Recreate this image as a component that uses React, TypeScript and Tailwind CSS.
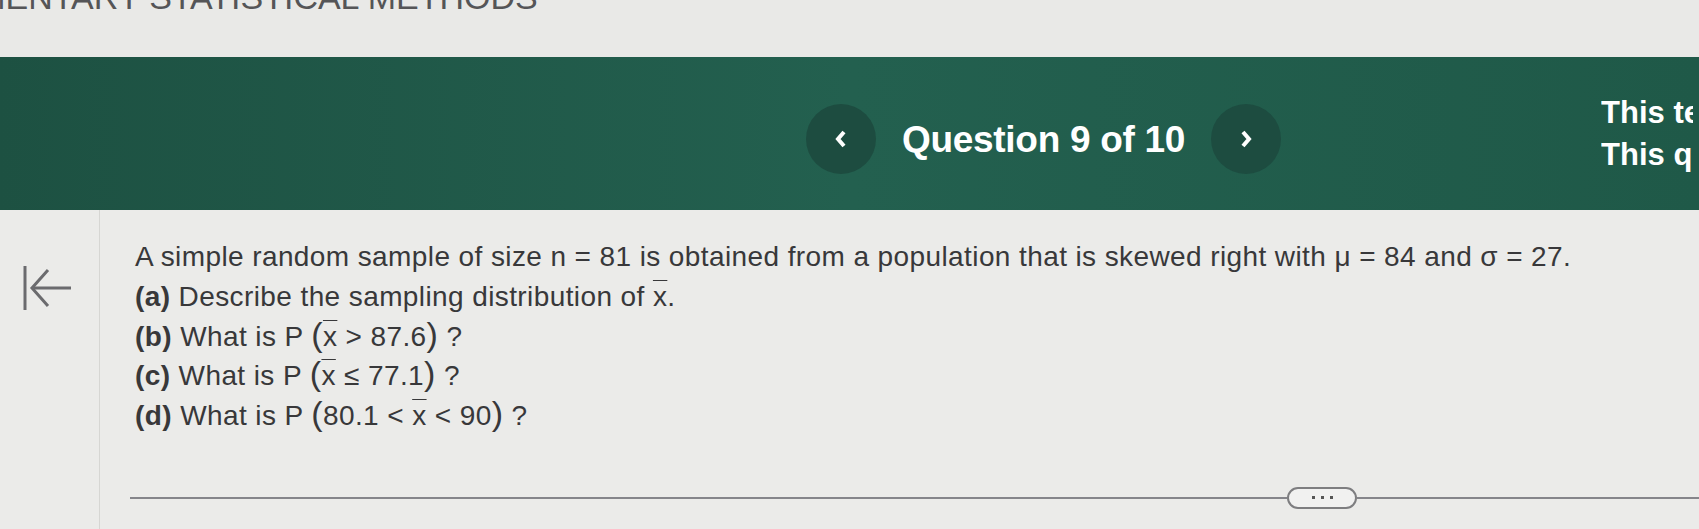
import React from 'react';

function Xbar() {
  return <span className="overline decoration-1">x</span>;
}

function Paren({ children }: { children: React.ReactNode }) {
  return <span className="text-[34px] font-light leading-none">{children}</span>;
}

function Chevron({ dir }: { dir: 'left' | 'right' }) {
  return (
    <svg width="14" height="22" viewBox="0 0 14 22" fill="none">
      <polyline
        points={dir === 'left' ? '10,4 4,11 10,18' : '4,4 10,11 4,18'}
        stroke="white"
        strokeWidth="4"
        strokeLinejoin="miter"
      />
    </svg>
  );
}

export default function App() {
  return (
    <div className="w-[1699px] h-[529px] overflow-hidden bg-[#ebebe9] font-['Liberation_Sans',Arial,sans-serif] text-[#38383a]">
      {/* course title, mostly scrolled off the top */}
      <div className="h-[57px] overflow-hidden bg-[#e9e9e7]">
        <div className="-mt-[20px] -ml-[87px] whitespace-nowrap text-[34px] leading-[34px] text-[#555557]">
          ELEMENTARY STATISTICAL METHODS
        </div>
      </div>

      {/* green header band */}
      <div className="h-[153px] flex items-start bg-gradient-to-r from-[#1d5142] via-[#23604f] to-[#1f5948] pl-[806px]">
        <div className="mt-[47px] flex items-center gap-[26px]">
          <button className="w-[70px] h-[70px] rounded-full bg-[#1d4c40] flex items-center justify-center">
            <Chevron dir="left" />
          </button>
          <span className="text-[37px] font-bold text-white tracking-[-0.3px] leading-none">Question 9 of 10</span>
          <button className="w-[70px] h-[70px] rounded-full bg-[#1d4c40] flex items-center justify-center">
            <Chevron dir="right" />
          </button>
        </div>
        <div className="ml-[320px] mt-[35px] w-[92px] overflow-hidden whitespace-nowrap text-[31px] leading-[42px] font-bold text-white">
          <div>This test: 10 point(s) possible</div>
          <div>This question: 1 point(s) possible</div>
        </div>
      </div>

      {/* body */}
      <div className="flex h-[319px]">
        <div className="w-[100px] shrink-0 border-r border-[#d6d6d3] pl-[22px] pt-[54px]">
          <svg width="50" height="48" viewBox="0 0 50 48" fill="none" stroke="#6b6b6e" strokeWidth="3">
            <line x1="3" y1="2" x2="3" y2="46" />
            <line x1="10" y1="24" x2="49" y2="24" />
            <polyline points="26,6 10,24 26,42" />
          </svg>
        </div>
        <div className="flex-1 pl-[30px] pt-[27px] flex flex-col">
          <div className="pl-[5px] text-[28px] tracking-[0.4px] leading-[39.75px] whitespace-nowrap">
            <div>
              A simple random sample of size n = 81 is obtained from a population that is skewed right with μ = 84 and σ = 27.
            </div>
            <div>
              <b>(a)</b> Describe the sampling distribution of <Xbar />.
            </div>
            <div>
              <b>(b)</b> What is P <Paren>(</Paren><Xbar /> &gt; 87.6<Paren>)</Paren> ?
            </div>
            <div>
              <b>(c)</b> What is P <Paren>(</Paren><Xbar /> ≤ 77.1<Paren>)</Paren> ?
            </div>
            <div>
              <b>(d)</b> What is P <Paren>(</Paren>80.1 &lt; <Xbar /> &lt; 90<Paren>)</Paren> ?
            </div>
          </div>
          <div className="mt-[51px] flex items-center">
            <div className="w-[1157px] h-[2px] bg-[#85858a]" />
            <div className="w-[70px] h-[22px] rounded-full border-2 border-[#7e7e80] bg-[#f1f1f0] flex items-center justify-center gap-[6px]">
              <span className="w-[3px] h-[3px] bg-[#555]" />
              <span className="w-[3px] h-[3px] bg-[#555]" />
              <span className="w-[3px] h-[3px] bg-[#555]" />
            </div>
            <div className="flex-1 h-[2px] bg-[#85858a]" />
          </div>
        </div>
      </div>
    </div>
  );
}
